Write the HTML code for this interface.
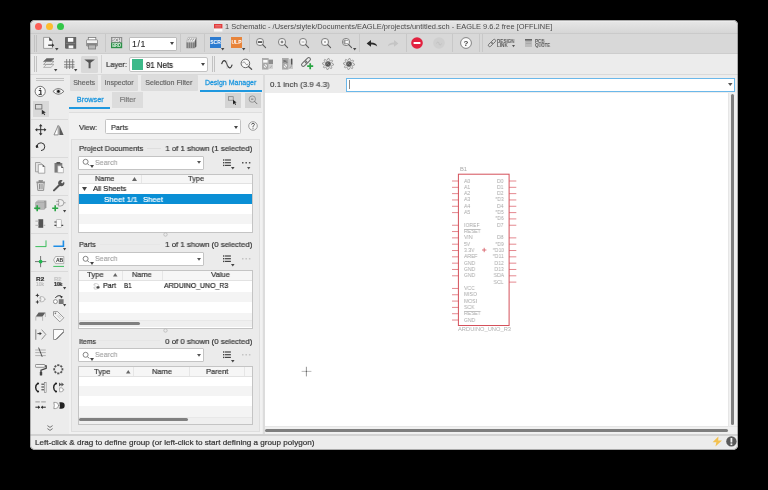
<!DOCTYPE html>
<html><head><meta charset="utf-8">
<style>
*{box-sizing:border-box;margin:0;padding:0}
html,body{width:768px;height:490px;overflow:hidden;background:#000}
body{position:relative;font-family:"Liberation Sans",sans-serif;color:#333}
.a{position:absolute}
#win{position:absolute;left:30px;top:20px;width:708px;height:430px;background:#ececec;border-radius:5px;overflow:hidden}
#pg{position:absolute;left:-30px;top:-20px;width:768px;height:490px}
.t{position:absolute;white-space:nowrap;line-height:1;-webkit-text-stroke:0.2px currentColor;will-change:transform}
svg{overflow:visible;will-change:transform}
</style></head><body>
<div id="win"><div id="pg">
<div class="a" style="left:30px;top:20px;width:708px;height:12.6px;background:linear-gradient(#e8e8e8,#d6d6d6)"></div>
<div class="a" style="left:30px;top:32.6px;width:708px;height:20.4px;background:#d8d8d8;border-top:1px solid #cacaca"></div>
<div class="a" style="left:30px;top:53px;width:708px;height:21px;background:#ececec;border-top:1px solid #cdcdcd"></div>
<div class="a" style="left:30px;top:74px;width:39px;height:360px;background:#ececec;border-right:1px solid #d4d4d4;border-top:1px solid #dadada"></div>
<div class="a" style="left:68px;top:74px;width:195px;height:360px;background:#ececec;border-top:1px solid #dadada"></div>
<div class="a" style="left:263px;top:74px;width:2px;height:360px;background:#dcdcdc"></div>
<div class="a" style="left:265px;top:74px;width:473px;height:19px;background:#ececec;border-top:1px solid #dadada"></div>
<div class="a" style="left:265px;top:93px;width:463px;height:333px;background:#fff"></div>
<div class="a" style="left:728px;top:93px;width:10px;height:333px;background:#f0f0f0;border-left:1px solid #e6e6e6"></div>
<div class="a" style="left:731px;top:94px;width:3px;height:331px;background:#7e7e7e;border-radius:2px"></div>
<div class="a" style="left:265px;top:426px;width:473px;height:8px;background:#f0f0f0;border-top:1px solid #e6e6e6"></div>
<div class="a" style="left:265px;top:429px;width:463px;height:3px;background:#7e7e7e;border-radius:2px"></div>
<div class="a" style="left:30px;top:434px;width:708px;height:16px;background:#ececec;border-top:2px solid #d2d2d2"></div>
<div class="a" style="left:35.1px;top:23.2px;width:7px;height:7px;border-radius:50%;background:#fc5f57"></div>
<div class="a" style="left:46.0px;top:23.2px;width:7px;height:7px;border-radius:50%;background:#fdbc2e"></div>
<div class="a" style="left:57.1px;top:23.2px;width:7px;height:7px;border-radius:50%;background:#33c748"></div>
<div class="a" style="left:70px;top:75px;width:28px;height:15.5px;background:#dcdcdc;border-radius:1px"></div>
<div class="t" style="left:-66.0px;width:300px;text-align:center;top:79.3px;font-size:7.8px;color:#666;"><span style="display:inline-block;transform:scaleX(0.9063);transform-origin:50% 0">Sheets</span></div>
<div class="a" style="left:100.5px;top:75px;width:37.5px;height:15.5px;background:#dcdcdc;border-radius:1px"></div>
<div class="t" style="left:-30.75px;width:300px;text-align:center;top:79.3px;font-size:7.8px;color:#666;"><span style="display:inline-block;transform:scaleX(0.9042);transform-origin:50% 0">Inspector</span></div>
<div class="a" style="left:141px;top:75px;width:56.5px;height:15.5px;background:#dcdcdc;border-radius:1px"></div>
<div class="t" style="left:19.25px;width:300px;text-align:center;top:79.3px;font-size:7.8px;color:#666;"><span style="display:inline-block;transform:scaleX(0.9114);transform-origin:50% 0">Selection Filter</span></div>
<div class="t" style="left:80.75px;width:300px;text-align:center;top:79.3px;font-size:7.8px;color:#1f98df;-webkit-text-stroke:0.3px"><span style="display:inline-block;transform:scaleX(0.8985);transform-origin:50% 0">Design Manager</span></div>
<div class="a" style="left:200px;top:89.5px;width:61.5px;height:2px;background:#1f98df"></div>
<div class="t" style="left:-60.5px;width:300px;text-align:center;top:95.9px;font-size:7.8px;color:#1f98df;-webkit-text-stroke:0.3px"><span style="display:inline-block;transform:scaleX(0.9442);transform-origin:50% 0">Browser</span></div>
<div class="a" style="left:69px;top:106.8px;width:41px;height:2px;background:#1f98df"></div>
<div class="a" style="left:112px;top:92px;width:31px;height:16px;background:#dcdcdc"></div>
<div class="t" style="left:-22.5px;width:300px;text-align:center;top:95.9px;font-size:7.8px;color:#777;"><span style="display:inline-block;transform:scaleX(0.9235);transform-origin:50% 0">Filter</span></div>
<div class="a" style="left:225px;top:92.5px;width:15.5px;height:15.2px;background:#d4d4d4"></div>
<div class="a" style="left:245px;top:92.5px;width:16px;height:15.2px;background:#d4d4d4"></div>
<div class="a" style="left:69px;top:111.5px;width:193px;height:322.5px;background:#f1f1f1;border-top:1px solid #dedede"></div>
<div class="t" style="left:79px;top:123.8px;font-size:8px;color:#333;transform:scaleX(0.9270);transform-origin:0 0;">View:</div>
<div class="a" style="left:105px;top:119.2px;width:135.5px;height:14.4px;background:#fff;border:1px solid #c4c4c4;border-radius:1.5px"></div>
<div class="t" style="left:111px;top:123.8px;font-size:8px;color:#333;transform:scaleX(0.9105);transform-origin:0 0;">Parts</div>
<div class="a" style="left:71px;top:139px;width:188.5px;height:293px;background:#ebebeb;border:1px solid #dedede"></div>
<div class="t" style="left:78.5px;top:144.7px;font-size:8px;color:#333;transform:scaleX(0.9514);transform-origin:0 0;">Project Documents</div>
<div class="t" style="right:515.5px;top:144.7px;font-size:8px;color:#333;transform:scaleX(0.9733);transform-origin:100% 0;">1 of 1 shown (1 selected)</div>
<div class="a" style="left:78.3px;top:155.5px;width:125.5px;height:14px;background:#fff;border:1px solid #c4c4c4;border-radius:1px"></div>
<div class="t" style="left:94.8px;top:158.5px;font-size:8px;color:#9c9c9c;transform:scaleX(0.8877);transform-origin:0 0;-webkit-text-stroke:0.1px">Search</div>
<div class="a" style="left:78.4px;top:173.5px;width:174.5px;height:59px;background:#fff;border:1px solid #c4c4c4"></div>
<div class="a" style="left:79.4px;top:174.5px;width:172.5px;height:9.5px;background:#f6f6f6;border-bottom:1px solid #e2e2e2"></div>
<div class="t" style="left:78.5px;top:241.3px;font-size:8px;color:#333;transform:scaleX(0.8944);transform-origin:0 0;">Parts</div>
<div class="t" style="right:515.5px;top:241.3px;font-size:8px;color:#333;transform:scaleX(0.9756);transform-origin:100% 0;">1 of 1 shown (0 selected)</div>
<div class="a" style="left:78.3px;top:252px;width:125.5px;height:14px;background:#fff;border:1px solid #c4c4c4;border-radius:1px"></div>
<div class="t" style="left:94.8px;top:255px;font-size:8px;color:#9c9c9c;transform:scaleX(0.8877);transform-origin:0 0;-webkit-text-stroke:0.1px">Search</div>
<div class="a" style="left:78.4px;top:270px;width:174.5px;height:58.5px;background:#fff;border:1px solid #c4c4c4"></div>
<div class="a" style="left:79.4px;top:271px;width:172.5px;height:9.5px;background:#f6f6f6;border-bottom:1px solid #e2e2e2"></div>
<div class="t" style="left:78.5px;top:337.5px;font-size:8px;color:#333;transform:scaleX(0.8692);transform-origin:0 0;">Items</div>
<div class="t" style="right:515.5px;top:337.5px;font-size:8px;color:#333;transform:scaleX(0.9756);transform-origin:100% 0;">0 of 0 shown (0 selected)</div>
<div class="a" style="left:78.3px;top:348px;width:125.5px;height:14px;background:#fff;border:1px solid #c4c4c4;border-radius:1px"></div>
<div class="t" style="left:94.8px;top:351px;font-size:8px;color:#9c9c9c;transform:scaleX(0.8877);transform-origin:0 0;-webkit-text-stroke:0.1px">Search</div>
<div class="a" style="left:78.4px;top:366px;width:174.5px;height:58.7px;background:#fff;border:1px solid #c4c4c4"></div>
<div class="a" style="left:79.4px;top:367px;width:172.5px;height:9.5px;background:#f6f6f6;border-bottom:1px solid #e2e2e2"></div>
<div class="a" style="left:79.4px;top:193.9px;width:172.5px;height:10.4px;background:#0a8fd5"></div>
<div class="a" style="left:79.4px;top:213.8px;width:172.5px;height:10.2px;background:#f4f4f4"></div>
<div class="t" style="left:95px;top:174.5px;font-size:8px;color:#333;transform:scaleX(0.9091);transform-origin:0 0;">Name</div>
<div class="t" style="left:188.3px;top:174.5px;font-size:8px;color:#333;transform:scaleX(0.9225);transform-origin:0 0;">Type</div>
<div class="t" style="left:92.6px;top:185px;font-size:8px;color:#222;transform:scaleX(0.9245);transform-origin:0 0;">All Sheets</div>
<div class="t" style="left:103.7px;top:195.5px;font-size:8px;color:#fff;transform:scaleX(0.9810);transform-origin:0 0;">Sheet 1/1</div>
<div class="t" style="left:143.4px;top:195.5px;font-size:8px;color:#fff;transform:scaleX(0.9567);transform-origin:0 0;">Sheet</div>
<div class="a" style="left:79.4px;top:291.6px;width:172.5px;height:10.5px;background:#f4f4f4"></div>
<div class="a" style="left:79.4px;top:313.4px;width:172.5px;height:7px;background:#f4f4f4"></div>
<div class="a" style="left:79.4px;top:320.4px;width:172.5px;height:7px;background:#efefef;border-top:1px solid #e8e8e8"></div>
<div class="t" style="left:87px;top:270.8px;font-size:8px;color:#333;transform:scaleX(0.9571);transform-origin:0 0;">Type</div>
<div class="t" style="left:131.7px;top:270.8px;font-size:8px;color:#333;transform:scaleX(0.9185);transform-origin:0 0;">Name</div>
<div class="t" style="left:211.4px;top:270.8px;font-size:8px;color:#333;transform:scaleX(0.9513);transform-origin:0 0;">Value</div>
<div class="t" style="left:102.7px;top:282px;font-size:8px;color:#222;transform:scaleX(0.8860);transform-origin:0 0;">Part</div>
<div class="t" style="left:124.2px;top:282px;font-size:8px;color:#222;transform:scaleX(0.7971);transform-origin:0 0;">B1</div>
<div class="t" style="left:164.4px;top:282px;font-size:8px;color:#222;transform:scaleX(0.8714);transform-origin:0 0;">ARDUINO_UNO_R3</div>
<div class="a" style="left:79.4px;top:322px;width:60.5px;height:3.2px;background:#808080;border-radius:2px"></div>
<div class="a" style="left:79.4px;top:386.2px;width:172.5px;height:9.8px;background:#f4f4f4"></div>
<div class="a" style="left:79.4px;top:406px;width:172.5px;height:10.5px;background:#f4f4f4"></div>
<div class="a" style="left:79.4px;top:416.5px;width:172.5px;height:7px;background:#efefef;border-top:1px solid #e8e8e8"></div>
<div class="t" style="left:93.6px;top:367.5px;font-size:8px;color:#333;transform:scaleX(0.9456);transform-origin:0 0;">Type</div>
<div class="t" style="left:151.5px;top:367.5px;font-size:8px;color:#333;transform:scaleX(0.9325);transform-origin:0 0;">Name</div>
<div class="t" style="left:205.6px;top:367.5px;font-size:8px;color:#333;transform:scaleX(0.9461);transform-origin:0 0;">Parent</div>
<div class="a" style="left:79.4px;top:418.3px;width:108.5px;height:3.2px;background:#808080;border-radius:2px"></div>
<div class="t" style="left:34.5px;top:438.8px;font-size:8px;color:#333;transform:scaleX(1.0154);transform-origin:0 0;">Left-click &amp; drag to define group (or left-click to start defining a group polygon)</div>
<div class="t" style="left:269.5px;top:81px;font-size:8px;color:#333;transform:scaleX(0.9928);transform-origin:0 0;-webkit-text-stroke:0.1px">0.1 inch (3.9 4.3)</div>
<div class="a" style="left:346px;top:77.5px;width:389px;height:14px;background:#fff;border:1px solid #6bb8ea"></div>
<svg class="a" style="left:234.0px;top:125.5px;" width="4" height="3" viewBox="0 0 4 3"><path d="M0 0H4L2.0 3Z" fill="#444"/></svg>
<svg class="a" style="left:248px;top:121px;" width="10" height="10" viewBox="0 0 10 10"><circle cx="5" cy="5" r="4.3" fill="#f6f6f6" stroke="#888" stroke-width="0.8"/><path d="M3.6 3.6Q3.8 2.3 5 2.3Q6.4 2.3 6.4 3.5Q6.4 4.3 5.4 4.8Q5 5 5 5.9" fill="none" stroke="#555" stroke-width="1"/><rect x="4.5" y="6.7" width="1" height="1" fill="#555"/></svg>
<svg class="a" style="left:81.5px;top:158.1px;" width="9" height="9" viewBox="0 0 9 9"><circle cx="3.6" cy="3.8" r="2.5" fill="none" stroke="#777" stroke-width="0.9"/><path d="M5.4 5.6L7.2 7.4" stroke="#777" stroke-width="1"/></svg>
<svg class="a" style="left:89.6px;top:165.4px;" width="4" height="3" viewBox="0 0 4 3"><path d="M0 0H4L2.0 3Z" fill="#444"/></svg>
<svg class="a" style="left:197.0px;top:161.1px;" width="4" height="2.8" viewBox="0 0 4 2.8"><path d="M0 0H4L2.0 2.8Z" fill="#555"/></svg>
<svg class="a" style="left:223px;top:159.9px;" width="9" height="9" viewBox="0 0 9 9"><rect x="0" y="-0.70" width="1.3" height="1.4" fill="#444"/><rect x="1.9" y="-0.60" width="6" height="1.2" fill="#444"/><rect x="0" y="2.00" width="1.3" height="1.4" fill="#444"/><rect x="1.9" y="2.10" width="6" height="1.2" fill="#444"/><rect x="0" y="4.70" width="1.3" height="1.4" fill="#444"/><rect x="1.9" y="4.80" width="6" height="1.2" fill="#444"/></svg>
<svg class="a" style="left:230.79999999999998px;top:167.1px;" width="3.6" height="2.6" viewBox="0 0 3.6 2.6"><path d="M0 0H3.6L1.8 2.6Z" fill="#444"/></svg>
<svg class="a" style="left:241.8px;top:161.8px;" width="10" height="2" viewBox="0 0 10 2"><rect x="0.00" y="0" width="1.5" height="1.5" fill="#555"/><rect x="3.45" y="0" width="1.5" height="1.5" fill="#555"/><rect x="6.90" y="0" width="1.5" height="1.5" fill="#555"/></svg>
<svg class="a" style="left:247.10000000000002px;top:167.3px;" width="3.4" height="2.4" viewBox="0 0 3.4 2.4"><path d="M0 0H3.4L1.7 2.4Z" fill="#555"/></svg>
<svg class="a" style="left:81.5px;top:254.6px;" width="9" height="9" viewBox="0 0 9 9"><circle cx="3.6" cy="3.8" r="2.5" fill="none" stroke="#777" stroke-width="0.9"/><path d="M5.4 5.6L7.2 7.4" stroke="#777" stroke-width="1"/></svg>
<svg class="a" style="left:89.6px;top:261.9px;" width="4" height="3" viewBox="0 0 4 3"><path d="M0 0H4L2.0 3Z" fill="#444"/></svg>
<svg class="a" style="left:197.0px;top:257.6px;" width="4" height="2.8" viewBox="0 0 4 2.8"><path d="M0 0H4L2.0 2.8Z" fill="#555"/></svg>
<svg class="a" style="left:223px;top:256.4px;" width="9" height="9" viewBox="0 0 9 9"><rect x="0" y="-0.70" width="1.3" height="1.4" fill="#444"/><rect x="1.9" y="-0.60" width="6" height="1.2" fill="#444"/><rect x="0" y="2.00" width="1.3" height="1.4" fill="#444"/><rect x="1.9" y="2.10" width="6" height="1.2" fill="#444"/><rect x="0" y="4.70" width="1.3" height="1.4" fill="#444"/><rect x="1.9" y="4.80" width="6" height="1.2" fill="#444"/></svg>
<svg class="a" style="left:230.79999999999998px;top:263.59999999999997px;" width="3.6" height="2.6" viewBox="0 0 3.6 2.6"><path d="M0 0H3.6L1.8 2.6Z" fill="#444"/></svg>
<svg class="a" style="left:241.8px;top:258.3px;" width="10" height="2" viewBox="0 0 10 2"><rect x="0.00" y="0" width="1.5" height="1.5" fill="#c4c4c4"/><rect x="3.45" y="0" width="1.5" height="1.5" fill="#c4c4c4"/><rect x="6.90" y="0" width="1.5" height="1.5" fill="#c4c4c4"/></svg>
<svg class="a" style="left:81.5px;top:350.6px;" width="9" height="9" viewBox="0 0 9 9"><circle cx="3.6" cy="3.8" r="2.5" fill="none" stroke="#777" stroke-width="0.9"/><path d="M5.4 5.6L7.2 7.4" stroke="#777" stroke-width="1"/></svg>
<svg class="a" style="left:89.6px;top:357.9px;" width="4" height="3" viewBox="0 0 4 3"><path d="M0 0H4L2.0 3Z" fill="#444"/></svg>
<svg class="a" style="left:197.0px;top:353.6px;" width="4" height="2.8" viewBox="0 0 4 2.8"><path d="M0 0H4L2.0 2.8Z" fill="#555"/></svg>
<svg class="a" style="left:223px;top:352.4px;" width="9" height="9" viewBox="0 0 9 9"><rect x="0" y="-0.70" width="1.3" height="1.4" fill="#444"/><rect x="1.9" y="-0.60" width="6" height="1.2" fill="#444"/><rect x="0" y="2.00" width="1.3" height="1.4" fill="#444"/><rect x="1.9" y="2.10" width="6" height="1.2" fill="#444"/><rect x="0" y="4.70" width="1.3" height="1.4" fill="#444"/><rect x="1.9" y="4.80" width="6" height="1.2" fill="#444"/></svg>
<svg class="a" style="left:230.79999999999998px;top:359.59999999999997px;" width="3.6" height="2.6" viewBox="0 0 3.6 2.6"><path d="M0 0H3.6L1.8 2.6Z" fill="#444"/></svg>
<svg class="a" style="left:241.8px;top:354.3px;" width="10" height="2" viewBox="0 0 10 2"><rect x="0.00" y="0" width="1.5" height="1.5" fill="#c4c4c4"/><rect x="3.45" y="0" width="1.5" height="1.5" fill="#c4c4c4"/><rect x="6.90" y="0" width="1.5" height="1.5" fill="#c4c4c4"/></svg>
<div class="a" style="left:147px;top:147.5px;width:14px;height:1px;background:#dedede"></div>
<div class="a" style="left:100px;top:243.5px;width:60px;height:1px;background:#e6e6e6"></div>
<div class="a" style="left:98px;top:339.5px;width:62px;height:1px;background:#e6e6e6"></div>
<svg class="a" style="left:162.5px;top:232px;" width="5" height="5" viewBox="0 0 5 5"><circle cx="2.5" cy="2.5" r="1.7" fill="none" stroke="#b8b8b8" stroke-width="0.8"/></svg>
<svg class="a" style="left:162.5px;top:328.4px;" width="5" height="5" viewBox="0 0 5 5"><circle cx="2.5" cy="2.5" r="1.7" fill="none" stroke="#b8b8b8" stroke-width="0.8"/></svg>
<svg class="a" style="left:132.0px;top:177.0px;" width="5" height="4" viewBox="0 0 5 4"><path d="M0 4H5L2.5 0Z" fill="#666"/></svg>
<div class="a" style="left:140.6px;top:174.5px;width:1px;height:8.5px;background:#e6e6e6"></div>
<svg class="a" style="left:82.3px;top:186.8px;" width="5" height="4" viewBox="0 0 5 4"><path d="M0 0H5L2.5 4Z" fill="#444"/></svg>
<svg class="a" style="left:112.95px;top:273.4px;" width="4.5" height="3.6" viewBox="0 0 4.5 3.6"><path d="M0 3.6H4.5L2.25 0Z" fill="#666"/></svg>
<div class="a" style="left:121.6px;top:271px;width:1px;height:9px;background:#e6e6e6"></div>
<div class="a" style="left:161.9px;top:271px;width:1px;height:9px;background:#e6e6e6"></div>
<svg class="a" style="left:92.5px;top:282.5px;" width="8" height="7" viewBox="0 0 8 7"><path d="M1.6 0.5H3A2.8 2.8 0 0 1 3 6.2H1.6Q2.6 3.3 1.6 0.5Z" fill="none" stroke="#c4c4c4" stroke-width="0.7"/><path d="M0.2 1.8H1.8M0.2 4.8H1.8" stroke="#c4c4c4" stroke-width="0.7"/><rect x="3.4" y="3.3" width="3.2" height="2.3" rx="1" fill="#444"/></svg>
<svg class="a" style="left:126.15px;top:369.7px;" width="4.5" height="3.6" viewBox="0 0 4.5 3.6"><path d="M0 3.6H4.5L2.25 0Z" fill="#666"/></svg>
<div class="a" style="left:133.4px;top:367px;width:1px;height:9px;background:#e6e6e6"></div>
<div class="a" style="left:189px;top:367px;width:1px;height:9px;background:#e6e6e6"></div>
<div class="a" style="left:244.3px;top:367px;width:1px;height:9px;background:#e6e6e6"></div>
<svg class="a" style="left:727.55px;top:83.0px;" width="4.5" height="3" viewBox="0 0 4.5 3"><path d="M0 0H4.5L2.25 3Z" fill="#555"/></svg>
<div class="a" style="left:349px;top:80px;width:0.8px;height:9px;background:#888"></div>
<div class="a" style="left:34px;top:35px;width:0.8px;height:17px;background:#c2c2c2"></div>
<div class="a" style="left:35.8px;top:35px;width:0.8px;height:17px;background:#c2c2c2"></div>
<div class="a" style="left:34px;top:56px;width:0.8px;height:16px;background:#c2c2c2"></div>
<div class="a" style="left:35.8px;top:56px;width:0.8px;height:16px;background:#c2c2c2"></div>
<svg class="a" style="left:43px;top:37px;" width="14" height="14" viewBox="0 0 14 14"><path d="M0.6 0.4H6.4L9.4 3.6V11.4H0.6Z" fill="#f6f6f6" stroke="#8a8a8a" stroke-width="0.8"/><path d="M6.2 0.2L9.6 3.8H6.2Z" fill="#444"/><path d="M5.2 8.2H10.2" stroke="#3a3a3a" stroke-width="1.3"/><path d="M9 6.2L11.3 8.2L9 10.2Z" fill="#3a3a3a"/></svg>
<svg class="a" style="left:54.6px;top:47.800000000000004px;" width="3.6" height="2.6" viewBox="0 0 3.6 2.6"><path d="M0 0H3.6L1.8 2.6Z" fill="#444"/></svg>
<svg class="a" style="left:65px;top:37px;" width="12" height="12" viewBox="0 0 12 12"><path d="M0 0.8Q0 0 0.8 0H11.2V11.8H0.8L0 11Z" fill="#646464"/><rect x="2.9" y="0.9" width="5.4" height="3.9" fill="#fff"/><rect x="3.6" y="8.5" width="4.7" height="2.8" fill="#fafafa"/><rect x="1" y="6.4" width="9.2" height="0.6" fill="#8a8a8a"/></svg>
<svg class="a" style="left:86px;top:36.5px;" width="12" height="13" viewBox="0 0 12 13"><rect x="2.3" y="0.5" width="7.5" height="3.5" fill="#fff" stroke="#7a7a7a" stroke-width="0.8"/><rect x="0.4" y="2.8" width="11.2" height="6.2" rx="0.8" fill="#f2f2f2" stroke="#7a7a7a" stroke-width="0.8"/><rect x="0.6" y="6" width="10.8" height="2.8" fill="#8c8c8c"/><rect x="2.6" y="8" width="7" height="4" fill="#b8b8b8" stroke="#7a7a7a" stroke-width="0.8"/></svg>
<div class="a" style="left:104.5px;top:34px;width:1px;height:18px;background:#c8c8c8"></div>
<svg class="a" style="left:110.8px;top:37.2px;" width="11.2" height="11.2" viewBox="0 0 11.2 11.2"><rect x="0.3" y="0.3" width="10.6" height="5.4" fill="#9a9a9a" stroke="#7e7e7e" stroke-width="0.6"/><rect x="0" y="5.6" width="11.2" height="5.6" fill="#2c9048"/><text x="5.6" y="4.9" font-size="4.8" text-anchor="middle" fill="#fff" font-family="Liberation Sans" font-weight="bold" transform="translate(5.6 0) scale(0.85 1) translate(-5.6 0)">SCH</text><text x="5.6" y="10.4" font-size="4.8" text-anchor="middle" fill="#e6f6ea" font-family="Liberation Sans" font-weight="bold" transform="translate(5.6 0) scale(0.85 1) translate(-5.6 0)">BRD</text></svg>
<div class="a" style="left:128.6px;top:36.6px;width:48px;height:14.4px;background:#fff;border:1px solid #bdbdbd;border-radius:1px"></div>
<div class="t" style="left:131.8px;top:39.6px;font-size:8.6px;color:#2a2a2a;transform:scaleX(1.0212);transform-origin:0 0;letter-spacing:0.6px;-webkit-text-stroke:0.1px">1/1</div>
<svg class="a" style="left:169.5px;top:42.0px;" width="4" height="3" viewBox="0 0 4 3"><path d="M0 0H4L2.0 3Z" fill="#444"/></svg>
<div class="a" style="left:180px;top:34px;width:1px;height:18px;background:#c8c8c8"></div>
<svg class="a" style="left:185.5px;top:37px;" width="11" height="12" viewBox="0 0 11 12"><path d="M0.4 4.8L2.2 0.4H10.4L8.6 4.8Z" fill="#ededed" stroke="#999" stroke-width="0.5"/><path d="M8.6 4.8L10.4 0.4V9.4L8.6 11.2Z" fill="#5e5e5e"/><rect x="0.4" y="4.8" width="8.2" height="6.4" fill="#7c7c7c"/><path d="M2.4 5V11.2M4.6 5V11.2M6.6 5V11.2" stroke="#b4b4b4" stroke-width="0.7"/><path d="M0.4 4.9H8.6" stroke="#f0f0f0" stroke-width="0.7"/><path d="M2 3.6L3.6 1.4M4.2 3.6L5.8 1.4M6.4 3.6L8 1.4" stroke="#7a7a7a" stroke-width="0.8"/></svg>
<div class="a" style="left:203.5px;top:34px;width:1px;height:18px;background:#c8c8c8"></div>
<svg class="a" style="left:209.7px;top:37.3px;" width="11" height="11" viewBox="0 0 11 11"><rect width="11" height="11" fill="#2c7bd0"/><text x="5.5" y="7.3" font-size="5" text-anchor="middle" fill="#fff" font-family="Liberation Sans" font-weight="bold">SCR</text></svg>
<svg class="a" style="left:220.8px;top:48.0px;" width="3.4" height="2.4" viewBox="0 0 3.4 2.4"><path d="M0 0H3.4L1.7 2.4Z" fill="#444"/></svg>
<svg class="a" style="left:231px;top:37.3px;" width="11" height="11" viewBox="0 0 11 11"><rect width="11" height="11" fill="#e8843a"/><text x="5.5" y="7.3" font-size="5" text-anchor="middle" fill="#fff" font-family="Liberation Sans" font-weight="bold">ULP</text></svg>
<svg class="a" style="left:242.10000000000002px;top:48.0px;" width="3.4" height="2.4" viewBox="0 0 3.4 2.4"><path d="M0 0H3.4L1.7 2.4Z" fill="#444"/></svg>
<div class="a" style="left:248.8px;top:34px;width:1px;height:18px;background:#c8c8c8"></div>
<svg class="a" style="left:253.8px;top:35.8px;" width="14" height="14" viewBox="0 0 14 14"><circle cx="6" cy="6" r="3.6" fill="#fbfbfb" stroke="#6e6e6e" stroke-width="0.9"/><circle cx="6" cy="6" r="2.9" fill="none" stroke="#c8c8c8" stroke-width="0.5"/><path d="M8.7 8.7L11.6 11.6" stroke="#5a5a5a" stroke-width="1.1" stroke-linecap="round"/><rect x="3.9" y="5.2" width="4.3" height="1.7" fill="#4a4a4a"/></svg>
<svg class="a" style="left:275.5px;top:35.8px;" width="14" height="14" viewBox="0 0 14 14"><circle cx="6" cy="6" r="3.6" fill="#fbfbfb" stroke="#6e6e6e" stroke-width="0.9"/><circle cx="6" cy="6" r="2.9" fill="none" stroke="#c8c8c8" stroke-width="0.5"/><path d="M8.7 8.7L11.6 11.6" stroke="#5a5a5a" stroke-width="1.1" stroke-linecap="round"/><path d="M6 4.6V7.4M4.6 6H7.4" stroke="#555" stroke-width="0.9"/></svg>
<svg class="a" style="left:297.2px;top:35.8px;" width="14" height="14" viewBox="0 0 14 14"><circle cx="6" cy="6" r="3.6" fill="#fbfbfb" stroke="#6e6e6e" stroke-width="0.9"/><circle cx="6" cy="6" r="2.9" fill="none" stroke="#c8c8c8" stroke-width="0.5"/><path d="M8.7 8.7L11.6 11.6" stroke="#5a5a5a" stroke-width="1.1" stroke-linecap="round"/><path d="M4.6 6H7.4" stroke="#aaa" stroke-width="1"/></svg>
<svg class="a" style="left:318.6px;top:35.8px;" width="14" height="14" viewBox="0 0 14 14"><circle cx="6" cy="6" r="3.6" fill="#fbfbfb" stroke="#6e6e6e" stroke-width="0.9"/><circle cx="6" cy="6" r="2.9" fill="none" stroke="#c8c8c8" stroke-width="0.5"/><path d="M8.7 8.7L11.6 11.6" stroke="#5a5a5a" stroke-width="1.1" stroke-linecap="round"/><rect x="5.1" y="5.1" width="1.8" height="1.8" fill="#aaa"/></svg>
<svg class="a" style="left:340px;top:35.8px;" width="14" height="14" viewBox="0 0 14 14"><circle cx="6" cy="6" r="3.6" fill="#fbfbfb" stroke="#6e6e6e" stroke-width="0.9"/><circle cx="6" cy="6" r="2.9" fill="none" stroke="#c8c8c8" stroke-width="0.5"/><path d="M8.7 8.7L11.6 11.6" stroke="#5a5a5a" stroke-width="1.1" stroke-linecap="round"/><path d="M3.2 6A2.8 2.8 0 0 1 5.4 3.2V8.8A2.8 2.8 0 0 1 3.2 6Z" fill="#999"/><rect x="4" y="4.2" width="4" height="0.8" fill="#999"/><rect x="4" y="7" width="4" height="0.8" fill="#999"/></svg>
<svg class="a" style="left:352.7px;top:48.0px;" width="3.4" height="2.4" viewBox="0 0 3.4 2.4"><path d="M0 0H3.4L1.7 2.4Z" fill="#444"/></svg>
<div class="a" style="left:359.4px;top:34px;width:1px;height:18px;background:#c8c8c8"></div>
<svg class="a" style="left:366px;top:38.5px;" width="12" height="9" viewBox="0 0 12 9"><path d="M11.2 7.6C10.6 4.6 8.6 3.6 5 3.6V1L0.6 4.4L5 7.8V5.4C7.6 5.4 9.6 5.8 11.2 7.6Z" fill="#2a2a2a"/></svg>
<svg class="a" style="left:386.8px;top:38.5px;" width="12" height="9" viewBox="0 0 12 9"><path d="M0.8 7.6C1.4 4.6 3.4 3.6 7 3.6V1L11.4 4.4L7 7.8V5.4C4.4 5.4 2.4 5.8 0.8 7.6Z" fill="#c4c4c4"/></svg>
<div class="a" style="left:405.6px;top:34px;width:1px;height:18px;background:#c8c8c8"></div>
<svg class="a" style="left:411px;top:37px;" width="12" height="12" viewBox="0 0 12 12"><circle cx="6" cy="6" r="5.8" fill="#e2213f"/><rect x="2.6" y="5" width="6.8" height="2" fill="#fff"/></svg>
<svg class="a" style="left:432.5px;top:37px;" width="12" height="12" viewBox="0 0 12 12"><circle cx="6" cy="6" r="5.8" fill="#cfcfcf"/><path d="M3.5 6.5c1-2 2-2 2.5 0s1.5 2 2.5 0" stroke="#bdbdbd" stroke-width="0.8" fill="none"/></svg>
<div class="a" style="left:451.9px;top:34px;width:1px;height:18px;background:#c8c8c8"></div>
<svg class="a" style="left:459.6px;top:37px;" width="12" height="12" viewBox="0 0 12 12"><circle cx="6" cy="6" r="5.4" fill="#fbfbfb" stroke="#777" stroke-width="0.9"/><text x="6" y="8.7" font-size="8" text-anchor="middle" fill="#444" font-family="Liberation Sans" font-weight="bold">?</text></svg>
<div class="a" style="left:478.8px;top:34px;width:1px;height:18px;background:#c8c8c8"></div>
<div class="a" style="left:481.5px;top:34px;width:1px;height:18px;background:#c8c8c8"></div>
<svg class="a" style="left:488.4px;top:38.8px;" width="8" height="8" viewBox="0 0 8 8"><g transform="translate(4 4) rotate(-45)"><rect x="-4.6" y="-1.4" width="5.2" height="2.8" rx="1.4" fill="none" stroke="#666" stroke-width="0.85"/><rect x="-0.6" y="-1.4" width="5.2" height="2.8" rx="1.4" fill="none" stroke="#666" stroke-width="0.85"/></g></svg>
<div class="t" style="left:497.2px;top:39.5px;font-size:4.6px;color:#555;transform:scaleX(0.9766);transform-origin:0 0;font-weight:bold;-webkit-text-stroke:0">DESIGN</div>
<div class="t" style="left:497.2px;top:43.9px;font-size:4.6px;color:#555;transform:scaleX(0.9792);transform-origin:0 0;font-weight:bold;-webkit-text-stroke:0">LINK</div>
<svg class="a" style="left:511.5px;top:44.5px;" width="3" height="2.2" viewBox="0 0 3 2.2"><path d="M0 0H3L1.5 2.2Z" fill="#555"/></svg>
<svg class="a" style="left:525px;top:38.6px;" width="7" height="8" viewBox="0 0 7 8"><rect x="0" y="0" width="7" height="8" fill="#bcbcbc"/><rect x="0" y="0" width="7" height="1.6" fill="#666"/><rect x="0.8" y="2.6" width="5.4" height="0.5" fill="#999"/><rect x="0.8" y="4.2" width="5.4" height="0.5" fill="#999"/></svg>
<div class="t" style="left:535px;top:39.5px;font-size:4.6px;color:#555;transform:scaleX(0.9528);transform-origin:0 0;font-weight:bold;-webkit-text-stroke:0">PCB</div>
<div class="t" style="left:535px;top:43.9px;font-size:4.6px;color:#555;transform:scaleX(0.9183);transform-origin:0 0;font-weight:bold;-webkit-text-stroke:0">QUOTE</div>
<svg class="a" style="left:43px;top:58px;" width="12" height="11" viewBox="0 0 12 11"><path d="M0.5 3.6L3.6 0.6H11L7.9 3.6Z" fill="#666" stroke="#666" stroke-width="0.6"/><path d="M0.5 6.4L3.6 3.4H11L7.9 6.4Z" fill="none" stroke="#8a8a8a" stroke-width="0.7"/><path d="M0.5 9.4L3.6 6.4H11L7.9 9.4Z" fill="none" stroke="#9a9a9a" stroke-width="0.7"/></svg>
<svg class="a" style="left:53.9px;top:68.8px;" width="3.4" height="2.4" viewBox="0 0 3.4 2.4"><path d="M0 0H3.4L1.7 2.4Z" fill="#444"/></svg>
<svg class="a" style="left:63.5px;top:58.5px;" width="11" height="10.5" viewBox="0 0 11 10.5"><path d="M2.7 0V10M5.6 0V10M8.7 0V10M0 2.9H10.5M0 5.7H10.5M0 8H10.5" stroke="#6c6c6c" stroke-width="0.8"/></svg>
<svg class="a" style="left:74.2px;top:68.8px;" width="3.4" height="2.4" viewBox="0 0 3.4 2.4"><path d="M0 0H3.4L1.7 2.4Z" fill="#444"/></svg>
<div class="a" style="left:81.3px;top:56px;width:17px;height:16.7px;background:#d9d9d9;border-radius:1.5px"></div>
<svg class="a" style="left:83.5px;top:59px;" width="12" height="10" viewBox="0 0 12 10"><path d="M0.3 0.5H11L6.6 3.8V9.3H4.6V3.8Z" fill="#555"/></svg>
<div class="a" style="left:101.3px;top:55px;width:1px;height:18px;background:#d4d4d4"></div>
<div class="t" style="left:105.6px;top:60.5px;font-size:8px;color:#333;transform:scaleX(0.9445);transform-origin:0 0;">Layer:</div>
<div class="a" style="left:129px;top:57.3px;width:78.5px;height:14.5px;background:#fff;border:1px solid #c2c2c2;border-radius:2px"></div>
<div class="a" style="left:131.5px;top:58.9px;width:11.6px;height:11.2px;background:#3dba8a"></div>
<div class="t" style="left:146.3px;top:60.6px;font-size:8.3px;color:#222;transform:scaleX(0.9408);transform-origin:0 0;">91 Nets</div>
<svg class="a" style="left:200.5px;top:62.8px;" width="4" height="3" viewBox="0 0 4 3"><path d="M0 0H4L2.0 3Z" fill="#444"/></svg>
<div class="a" style="left:211.8px;top:56px;width:0.8px;height:16px;background:#c2c2c2"></div>
<div class="a" style="left:213.60000000000002px;top:56px;width:0.8px;height:16px;background:#c2c2c2"></div>
<svg class="a" style="left:220.5px;top:59.5px;" width="12" height="9" viewBox="0 0 12 9"><path d="M0.6 4.2C2 -0.6 4.4 -0.6 5.9 4.2S9.8 9 11.2 4.6" fill="none" stroke="#3a3a3a" stroke-width="1.1"/><path d="M6 0V9" stroke="#bbb" stroke-width="0.5"/></svg>
<svg class="a" style="left:240px;top:57.5px;" width="13" height="13" viewBox="0 0 13 13"><circle cx="5.4" cy="5.4" r="4.3" fill="#f8f8f8" stroke="#666" stroke-width="1"/><path d="M8.5 8.5L11.6 11.3" stroke="#555" stroke-width="1.3" stroke-linecap="round"/><path d="M2.6 5.2C3.6 3.2 4.4 3.6 5.4 5.4S7.4 7.4 8.2 5.6" fill="none" stroke="#666" stroke-width="0.7"/></svg>
<svg class="a" style="left:261.8px;top:58px;" width="11.4" height="11.4" viewBox="0 0 11.4 11.4"><rect x="0.2" y="0.2" width="6.2" height="11" fill="#adadad" stroke="#9a9a9a" stroke-width="0.4"/><rect x="1.2" y="2" width="4.4" height="2.6" fill="#fafafa"/><rect x="6.6" y="1.6" width="4.4" height="4.6" fill="#8e8e8e"/><rect x="6.6" y="6.2" width="4.4" height="4.6" fill="#d0d0d0"/><path d="M7.6 10Q9.6 9.4 9.6 7.6" stroke="#999" stroke-width="0.6" fill="none"/><circle cx="3.4" cy="8" r="2.2" fill="#f2f2f2" stroke="#888" stroke-width="0.6"/><path d="M2 6.8L4.8 9.3" stroke="#777" stroke-width="0.7"/></svg>
<svg class="a" style="left:282.1px;top:58px;" width="11.4" height="11.4" viewBox="0 0 11.4 11.4"><rect x="0.2" y="0.2" width="6.2" height="11" fill="#adadad" stroke="#9a9a9a" stroke-width="0.4"/><rect x="1.2" y="1.8" width="4.4" height="3" fill="#9a9a9a"/><path d="M1.4 2.4L5.4 4.6M1.4 4.4L3.4 2" stroke="#555" stroke-width="0.6"/><rect x="6.6" y="1.2" width="4.4" height="9.8" fill="#c8c8c8"/><rect x="9" y="0.6" width="1.3" height="6" fill="#555"/><path d="M7.4 10Q9.6 9.4 9.6 7.2" stroke="#888" stroke-width="0.6" fill="none"/><circle cx="3.4" cy="8" r="2.2" fill="#f2f2f2" stroke="#888" stroke-width="0.6"/><path d="M2 6.8L4.8 9.3" stroke="#777" stroke-width="0.7"/></svg>
<svg class="a" style="left:301px;top:57.2px;" width="10" height="10" viewBox="0 0 10 10"><g transform="translate(5 5) rotate(-45)"><rect x="-5.6" y="-1.7" width="6.4" height="3.4" rx="1.7" fill="none" stroke="#6a6a6a" stroke-width="1"/><rect x="-0.8" y="-1.7" width="6.4" height="3.4" rx="1.7" fill="none" stroke="#6a6a6a" stroke-width="1"/></g></svg>
<svg class="a" style="left:307.3px;top:63.4px;" width="7" height="7" viewBox="0 0 7 7"><path d="M3.2 0.2V6.2M0.2 3.2H6.2" stroke="#2aa544" stroke-width="1.7"/></svg>
<svg class="a" style="left:322.2px;top:57.6px;" width="12" height="12" viewBox="0 0 12 12"><polygon points="6.00,0.40 7.09,0.51 7.53,2.30 8.22,2.67 9.96,2.04 10.66,2.89 9.70,4.47 9.92,5.22 11.60,6.00 11.49,7.09 9.70,7.53 9.33,8.22 9.96,9.96 9.11,10.66 7.53,9.70 6.78,9.92 6.00,11.60 4.91,11.49 4.47,9.70 3.78,9.33 2.04,9.96 1.34,9.11 2.30,7.53 2.08,6.78 0.40,6.00 0.51,4.91 2.30,4.47 2.67,3.78 2.04,2.04 2.89,1.34 4.47,2.30 5.22,2.08" fill="#e4e4e4" stroke="#8a8a8a" stroke-width="0.7" stroke-linejoin="round"/><circle cx="6" cy="6" r="2.8" fill="#555"/><path d="M4.4 4.6L7.6 7.6M4.2 6.8L6.2 4.2" stroke="#999" stroke-width="0.6"/></svg>
<svg class="a" style="left:342.5px;top:57.6px;" width="12" height="12" viewBox="0 0 12 12"><polygon points="6.00,0.40 7.09,0.51 7.53,2.30 8.22,2.67 9.96,2.04 10.66,2.89 9.70,4.47 9.92,5.22 11.60,6.00 11.49,7.09 9.70,7.53 9.33,8.22 9.96,9.96 9.11,10.66 7.53,9.70 6.78,9.92 6.00,11.60 4.91,11.49 4.47,9.70 3.78,9.33 2.04,9.96 1.34,9.11 2.30,7.53 2.08,6.78 0.40,6.00 0.51,4.91 2.30,4.47 2.67,3.78 2.04,2.04 2.89,1.34 4.47,2.30 5.22,2.08" fill="#e4e4e4" stroke="#8a8a8a" stroke-width="0.7" stroke-linejoin="round"/><circle cx="6" cy="6" r="2.8" fill="#555"/><path d="M4.4 4.6L7.6 7.6M4.2 6.8L6.2 4.2" stroke="#999" stroke-width="0.6"/></svg>
<svg class="a" style="left:214.4px;top:23.6px;" width="8.4" height="7.6" viewBox="0 0 8.4 7.6"><rect x="0" y="0" width="8.4" height="4.6" fill="#e03a3a"/><rect x="0" y="4.6" width="8.4" height="3" fill="#f8f8f8"/><path d="M1.2 1.6h6M1.2 3h6" stroke="#f6b0b0" stroke-width="0.5"/></svg>
<div class="t" style="left:225.2px;top:23.4px;font-size:7.3px;color:#4a4a4a;transform:scaleX(1.0200);transform-origin:0 0;-webkit-text-stroke:0">1 Schematic - /Users/siytek/Documents/EAGLE/projects/untitled.sch - EAGLE 9.6.2 free [OFFLINE]</div>
<div class="a" style="left:35.5px;top:78px;width:28px;height:0.8px;background:#c4c4c4"></div>
<div class="a" style="left:35.5px;top:80px;width:28px;height:0.8px;background:#c4c4c4"></div>
<div class="a" style="left:31px;top:119px;width:37px;height:1px;background:#dadada"></div>
<div class="a" style="left:31px;top:157px;width:37px;height:1px;background:#dadada"></div>
<div class="a" style="left:31px;top:195px;width:37px;height:1px;background:#dadada"></div>
<div class="a" style="left:31px;top:233.3px;width:37px;height:1px;background:#dadada"></div>
<div class="a" style="left:31px;top:270.8px;width:37px;height:1px;background:#dadada"></div>
<svg class="a" style="left:34px;top:86px;" width="12" height="12" viewBox="0 0 12 12"><circle cx="6.2" cy="5.4" r="5.1" fill="#fafafa" stroke="#555" stroke-width="0.8"/><rect x="5.6" y="2" width="1.3" height="1.3" fill="#333"/><path d="M4.8 4.5H6.8V8.2" stroke="#333" stroke-width="1.2" fill="none"/><path d="M4.6 8.4H7.8" stroke="#333" stroke-width="1"/></svg>
<svg class="a" style="left:52px;top:87px;" width="13" height="9" viewBox="0 0 13 9"><path d="M0.9 4.4Q6.4 -1.4 11.9 4.4Q6.4 10.2 0.9 4.4Z" fill="#f6f6f6" stroke="#444" stroke-width="0.7"/><circle cx="6.4" cy="4.4" r="2.3" fill="#bbb"/><circle cx="6.4" cy="4.4" r="1.3" fill="#111"/></svg>
<div class="a" style="left:33px;top:101.3px;width:15.6px;height:15.3px;background:#d9d9d9"></div>
<svg class="a" style="left:35px;top:103.5px;" width="12" height="12" viewBox="0 0 12 12"><rect x="0.4" y="0.6" width="6.5" height="4.4" fill="none" stroke="#666" stroke-width="0.8"/><path d="M6.8 5.8L10.8 8.6L9 9L10.2 10.8L9.4 11.2L8.2 9.4L6.8 10.6Z" fill="#333"/></svg>
<svg class="a" style="left:34.5px;top:123.8px;" width="12" height="12" viewBox="0 0 12 12"><path d="M5.7 1V10.6M1 5.7H10.6" stroke="#333" stroke-width="1"/><path d="M5.7 0L7.5 2.2H3.9ZM5.7 11.4L7.5 9.2H3.9ZM0 5.7L2.2 3.9V7.5ZM11.4 5.7L9.2 3.9V7.5Z" fill="#333"/></svg>
<svg class="a" style="left:52.8px;top:124.6px;" width="12" height="11" viewBox="0 0 12 11"><path d="M5.2 0.4V9.9H1Z" fill="#fff" stroke="#666" stroke-width="0.7"/><path d="M6.4 0.4V9.9H10.6Z" fill="#5a5a5a"/></svg>
<svg class="a" style="left:35px;top:141px;" width="11" height="11" viewBox="0 0 11 11"><path d="M2 5.2A3.9 3.9 0 1 1 6 9.6" fill="none" stroke="#333" stroke-width="1"/><path d="M0.4 5.2L2.2 3.6L3.6 6.8Z" fill="#222"/><circle cx="1.9" cy="6" r="1" fill="#222"/></svg>
<svg class="a" style="left:34.7px;top:161.8px;" width="11" height="12" viewBox="0 0 11 12"><path d="M0.5 0.5H5.2L7 2.4V9.8H0.5Z" fill="#e4e4e4" stroke="#888" stroke-width="0.7"/><path d="M3.3 2.6H7.8L9.8 4.6V11.2H3.3Z" fill="#fafafa" stroke="#888" stroke-width="0.7"/><path d="M7.6 2.5L9.9 4.8H7.6Z" fill="#444"/></svg>
<svg class="a" style="left:53.5px;top:162px;" width="11" height="12" viewBox="0 0 11 12"><rect x="0.5" y="1" width="7.8" height="9.6" fill="#7a7a7a"/><rect x="2.5" y="0" width="3.8" height="1.8" fill="#555"/><path d="M3.7 3.8H7.4L9.4 5.8V10.8H3.7Z" fill="#fafafa" stroke="#999" stroke-width="0.6"/><path d="M7.3 3.7L9.5 5.9H7.3Z" fill="#444"/></svg>
<svg class="a" style="left:35.5px;top:179.8px;" width="10" height="11" viewBox="0 0 10 11"><rect x="0.4" y="1.6" width="8.6" height="1.1" fill="#777"/><rect x="3" y="0.4" width="3.4" height="1.2" fill="none" stroke="#777" stroke-width="0.7"/><path d="M1.2 2.8H8.2L7.6 10.4H1.8Z" fill="#ececec" stroke="#777" stroke-width="0.8"/><path d="M3.4 4V9.2M6 4V9.2" stroke="#777" stroke-width="0.9"/><path d="M4.7 4V9.2" stroke="#aaa" stroke-width="0.9"/></svg>
<svg class="a" style="left:53px;top:179.6px;" width="11.5" height="11.5" viewBox="0 0 11.5 11.5"><path d="M1 10.4L6.2 5.2" stroke="#555" stroke-width="2" stroke-linecap="round"/><path d="M5.4 4.2A3 3 0 0 1 9.6 0.4L8 2.2L9.2 3.4L11 1.8A3 3 0 0 1 7.2 6Z" fill="#555"/></svg>
<svg class="a" style="left:34.5px;top:200px;" width="12" height="10" viewBox="0 0 12 10"><path d="M0.4 2.4L2.6 0.4H11.4V7.4L9.4 9.4H0.4Z" fill="#9a9a9a"/><path d="M0.4 2.4H9.4V9.4H0.4Z" fill="#b8b8b8"/><path d="M2 1.4h7" stroke="#ddd" stroke-width="0.5"/></svg>
<svg class="a" style="left:34.4px;top:204.6px;" width="7" height="7" viewBox="0 0 7 7"><path d="M3.2 0.2V6.2M0.2 3.2H6.2" stroke="#2aa544" stroke-width="1.6"/></svg>
<svg class="a" style="left:55.5px;top:199.4px;" width="10" height="8" viewBox="0 0 10 8"><path d="M2.2 0.6H4.6A3.2 3.2 0 0 1 4.6 7H2.2Q3.6 3.8 2.2 0.6Z" fill="#f0f0f0" stroke="#777" stroke-width="0.6"/><path d="M0.2 2.4H3M0.2 5.2H3M7.8 3.8H9.6" stroke="#777" stroke-width="0.6"/></svg>
<svg class="a" style="left:52.4px;top:205.3px;" width="7" height="7" viewBox="0 0 7 7"><path d="M3.2 0.2V6.2M0.2 3.2H6.2" stroke="#2aa544" stroke-width="1.6"/></svg>
<svg class="a" style="left:63.4px;top:210.20000000000002px;" width="3.2" height="2.4" viewBox="0 0 3.2 2.4"><path d="M0 0H3.2L1.6 2.4Z" fill="#444"/></svg>
<svg class="a" style="left:34.5px;top:218.6px;" width="12" height="9" viewBox="0 0 12 9"><rect x="3.4" y="0.2" width="4.8" height="8.6" fill="#555"/><path d="M0.4 2.2H3.4M0.4 6.4H3.4M8.2 6.4H10.2" stroke="#bbb" stroke-width="1.2"/></svg>
<svg class="a" style="left:53px;top:218.6px;" width="12" height="9" viewBox="0 0 12 9"><rect x="3.4" y="0.4" width="5" height="8.2" rx="1" fill="#fafafa" stroke="#999" stroke-width="0.6"/><path d="M1.4 3H3.4M1.4 6.4H3.4M8.4 6.4H10.2" stroke="#444" stroke-width="1.2"/></svg>
<svg class="a" style="left:34.6px;top:240px;" width="12" height="7.5" viewBox="0 0 12 7.5"><path d="M0.4 6.6H11M11 0.4V6.8" stroke="#3cbd5c" stroke-width="1" fill="none"/></svg>
<svg class="a" style="left:53px;top:239.8px;" width="12" height="7.5" viewBox="0 0 12 7.5"><path d="M0.4 6.2H10.4M10.4 0.4V7" stroke="#1e8ee6" stroke-width="1.6" fill="none"/></svg>
<svg class="a" style="left:63.4px;top:248.20000000000002px;" width="3.2" height="2.4" viewBox="0 0 3.2 2.4"><path d="M0 0H3.2L1.6 2.4Z" fill="#444"/></svg>
<svg class="a" style="left:34.6px;top:255.8px;" width="11.2" height="11.2" viewBox="0 0 11.2 11.2"><path d="M5.6 0V11.2M0 5.6H11.2" stroke="#555" stroke-width="0.8"/><circle cx="5.6" cy="5.6" r="1.9" fill="#1fb84e"/></svg>
<svg class="a" style="left:52.8px;top:255.6px;" width="11.5" height="11.5" viewBox="0 0 11.5 11.5"><path d="M2.6 0.5H10.8V7.6H2.6L0.5 4Z" fill="#f6f6f6" stroke="#888" stroke-width="0.6"/><text x="6.6" y="6.2" font-size="5" text-anchor="middle" fill="#333" font-family="Liberation Sans" font-weight="bold">AB</text><path d="M0.3 10.4H11" stroke="#3cbd5c" stroke-width="1"/></svg>
<div class="t" style="left:35.6px;top:276px;font-size:6px;color:#333;transform:scaleX(1.0691);transform-origin:0 0;font-weight:bold">R2</div>
<div class="t" style="left:35.8px;top:281.8px;font-size:5px;color:#bbb;transform:scaleX(0.9924);transform-origin:0 0;">10k</div>
<div class="t" style="left:54px;top:276px;font-size:6px;color:#c4c4c4;transform:scaleX(0.9387);transform-origin:0 0;font-weight:bold">R2</div>
<div class="t" style="left:54px;top:281.8px;font-size:5.4px;color:#222;transform:scaleX(0.9205);transform-origin:0 0;font-weight:bold">10k</div>
<svg class="a" style="left:63.4px;top:286.6px;" width="3.2" height="2.4" viewBox="0 0 3.2 2.4"><path d="M0 0H3.2L1.6 2.4Z" fill="#444"/></svg>
<svg class="a" style="left:34.5px;top:293px;" width="12" height="12" viewBox="0 0 12 12"><path d="M2.4 0.2L3 1.8L4.6 2.4L3 3L2.4 4.6L1.8 3L0.2 2.4L1.8 1.8Z" fill="#333"/><path d="M2.4 6.8L3 8.4L4.6 9L3 9.6L2.4 11.2L1.8 9.6L0.2 9L1.8 8.4Z" fill="#333"/><path d="M5.4 3.6H7A2.6 2.6 0 0 1 7 8.8H5.4Q6.4 6.2 5.4 3.6Z" fill="#f4f4f4" stroke="#999" stroke-width="0.6"/><path d="M9.6 6.2H11M4 5H5.8M4 7.4H5.8" stroke="#999" stroke-width="0.6"/></svg>
<svg class="a" style="left:52.6px;top:293.5px;" width="12" height="11" viewBox="0 0 12 11"><path d="M2.4 4A4 4 0 0 1 8.6 2.6" fill="none" stroke="#333" stroke-width="1"/><path d="M7.2 1.4L10 2.8L8 4.6Z" fill="#333"/><circle cx="2.4" cy="7.6" r="2" fill="#fff" stroke="#555" stroke-width="0.6"/><rect x="5.8" y="5.2" width="4.8" height="4.8" fill="#777"/></svg>
<svg class="a" style="left:63.4px;top:304.0px;" width="3.2" height="2.4" viewBox="0 0 3.2 2.4"><path d="M0 0H3.2L1.6 2.4Z" fill="#444"/></svg>
<svg class="a" style="left:34.8px;top:311.6px;" width="11" height="10" viewBox="0 0 11 10"><path d="M0.8 4.6L3.6 0.6H10.4L7.6 4.6Z" fill="#5e5e5e"/><path d="M0.8 4.6V8.6M7.6 4.6V8.8M10.4 0.6V5" stroke="#bbb" stroke-width="1" fill="none"/><path d="M0.8 4.6H7.6" stroke="#999" stroke-width="0.7"/></svg>
<svg class="a" style="left:52.8px;top:311px;" width="11.5" height="11.5" viewBox="0 0 11.5 11.5"><path d="M0.5 0.6H4.6L10.8 6.8L6.8 10.8L0.5 4.6Z" fill="#f4f4f4" stroke="#777" stroke-width="0.7"/><circle cx="2.4" cy="2.4" r="0.8" fill="#777"/><path d="M4 4.4L7.4 7.8M5.4 3.6L8.2 6.4" stroke="#aaa" stroke-width="0.6"/></svg>
<svg class="a" style="left:34.6px;top:328.6px;" width="12" height="11" viewBox="0 0 12 11"><path d="M0.8 0.4V10.8" stroke="#777" stroke-width="0.9"/><path d="M6.6 0.6L10.8 5.4L6.6 10.4" stroke="#777" stroke-width="0.8" fill="none"/><path d="M2.4 4.6H5" stroke="#333" stroke-width="0.9"/><path d="M4.6 3L6.8 4.6L4.6 6.2Z" fill="#333"/></svg>
<svg class="a" style="left:53px;top:328.8px;" width="11" height="11" viewBox="0 0 11 11"><path d="M0.5 0.5H10.5V3L3 10.5H0.5Z" fill="#fcfcfc" stroke="#777" stroke-width="0.7"/><path d="M3 10.5L10.5 3" stroke="#444" stroke-width="0.9"/></svg>
<svg class="a" style="left:34.8px;top:346.8px;" width="11.5" height="10.5" viewBox="0 0 11.5 10.5"><path d="M0.2 3H10.8M0.2 5.6H10.8M0.2 8.6H10.8" stroke="#999" stroke-width="0.7"/><path d="M3.6 0.6L7.2 9.8" stroke="#444" stroke-width="0.9"/></svg>
<svg class="a" style="left:34.6px;top:364px;" width="12" height="12" viewBox="0 0 12 12"><rect x="0.4" y="0.5" width="9.6" height="2.8" rx="0.8" fill="#f6f6f6" stroke="#666" stroke-width="0.7"/><path d="M10 1.9H11.2V4.4L6 6.2V8.4" stroke="#444" stroke-width="1.3" fill="none"/><rect x="4.8" y="7.8" width="2.4" height="3.8" rx="0.6" fill="#444"/></svg>
<svg class="a" style="left:53.2px;top:364.2px;" width="11" height="11" viewBox="0 0 11 11"><rect x="-1.1" y="-0.9" width="2.2" height="1.8" fill="#555" transform="translate(5.30 1.20) rotate(0)"/><rect x="-1.1" y="-0.9" width="2.2" height="1.8" fill="#555" transform="translate(8.20 2.40) rotate(45)"/><rect x="-1.1" y="-0.9" width="2.2" height="1.8" fill="#555" transform="translate(9.40 5.30) rotate(90)"/><rect x="-1.1" y="-0.9" width="2.2" height="1.8" fill="#555" transform="translate(8.20 8.20) rotate(135)"/><rect x="-1.1" y="-0.9" width="2.2" height="1.8" fill="#555" transform="translate(5.30 9.40) rotate(180)"/><rect x="-1.1" y="-0.9" width="2.2" height="1.8" fill="#555" transform="translate(2.40 8.20) rotate(225)"/><rect x="-1.1" y="-0.9" width="2.2" height="1.8" fill="#555" transform="translate(1.20 5.30) rotate(270)"/><rect x="-1.1" y="-0.9" width="2.2" height="1.8" fill="#555" transform="translate(2.40 2.40) rotate(315)"/></svg>
<svg class="a" style="left:34.6px;top:382px;" width="12" height="11" viewBox="0 0 12 11"><path d="M2.8 1.4A5 5 0 0 0 2.8 9.6" fill="none" stroke="#222" stroke-width="1.4"/><circle cx="3" cy="1.5" r="1.1" fill="#222"/><circle cx="3" cy="9.5" r="1.1" fill="#222"/><path d="M6.4 2.2H9.2M6.4 5H9.2M6.4 7.8H9.2" stroke="#333" stroke-width="1"/><rect x="9.3" y="0.4" width="1.8" height="10.2" fill="#fafafa" stroke="#777" stroke-width="0.6"/></svg>
<svg class="a" style="left:53px;top:382px;" width="12" height="11" viewBox="0 0 12 11"><path d="M2.8 1.4A5 5 0 0 0 2.8 9.6" fill="none" stroke="#222" stroke-width="1.4"/><circle cx="3" cy="1.5" r="1.1" fill="#222"/><circle cx="3" cy="9.5" r="1.1" fill="#222"/><path d="M6 0.4L8.6 2.4L6 4.4ZM8.4 0.4L11 2.4L8.4 4.4Z" fill="#555"/><path d="M6.6 5.8H8.2A2 2 0 0 1 8.2 9.8H6.6Z" fill="#fff" stroke="#777" stroke-width="0.6"/><path d="M10.2 7.8H11.2" stroke="#777" stroke-width="0.6"/></svg>
<svg class="a" style="left:34.6px;top:401.2px;" width="12" height="8" viewBox="0 0 12 8"><path d="M0.4 0.9H4.8M6.2 0.9H10.8" stroke="#999" stroke-width="1"/><path d="M0.4 6.2H4.2M10.8 6.2H6.8" stroke="#222" stroke-width="1"/><path d="M3.2 4.4L5.2 6.2L3.2 8ZM7.8 4.4L5.8 6.2L7.8 8Z" fill="#222"/></svg>
<svg class="a" style="left:52.6px;top:400.6px;" width="12" height="9" viewBox="0 0 12 9"><path d="M0.8 1.4H2.4A3.1 3.1 0 0 1 2.4 7.6H0.8Q1.8 4.5 0.8 1.4Z" fill="#fff" stroke="#777" stroke-width="0.7"/><path d="M5.2 4.5H6.6" stroke="#777" stroke-width="0.7"/><path d="M6.4 1.2H8.4A3.3 3.3 0 0 1 8.4 7.8H6.4Q7.4 4.5 6.4 1.2Z" fill="#222"/><path d="M11 4.5L8.8 2.6V6.4Z" fill="#222"/></svg>
<svg class="a" style="left:46.6px;top:424.8px;" width="6" height="7" viewBox="0 0 6 7"><path d="M0.4 0.6L3 2.4L5.6 0.6M0.4 3.6L3 5.4L5.6 3.6" fill="none" stroke="#555" stroke-width="0.8"/></svg>
<svg class="a" style="left:0;top:0" width="768" height="490" viewBox="0 0 768 490"><path d="M452 181.00H458.5" stroke="#e27b82" stroke-width="0.9"/><path d="M452 187.32H458.5" stroke="#e27b82" stroke-width="0.9"/><path d="M452 193.64H458.5" stroke="#e27b82" stroke-width="0.9"/><path d="M452 199.96H458.5" stroke="#e27b82" stroke-width="0.9"/><path d="M452 206.28H458.5" stroke="#e27b82" stroke-width="0.9"/><path d="M452 212.60H458.5" stroke="#e27b82" stroke-width="0.9"/><path d="M452 225.24H458.5" stroke="#e27b82" stroke-width="0.9"/><path d="M452 231.56H458.5" stroke="#e27b82" stroke-width="0.9"/><path d="M452 237.88H458.5" stroke="#e27b82" stroke-width="0.9"/><path d="M452 244.20H458.5" stroke="#e27b82" stroke-width="0.9"/><path d="M452 250.52H458.5" stroke="#e27b82" stroke-width="0.9"/><path d="M452 256.84H458.5" stroke="#e27b82" stroke-width="0.9"/><path d="M452 263.16H458.5" stroke="#e27b82" stroke-width="0.9"/><path d="M452 269.48H458.5" stroke="#e27b82" stroke-width="0.9"/><path d="M452 275.80H458.5" stroke="#e27b82" stroke-width="0.9"/><path d="M452 288.44H458.5" stroke="#e27b82" stroke-width="0.9"/><path d="M452 294.76H458.5" stroke="#e27b82" stroke-width="0.9"/><path d="M452 301.08H458.5" stroke="#e27b82" stroke-width="0.9"/><path d="M452 307.40H458.5" stroke="#e27b82" stroke-width="0.9"/><path d="M452 313.72H458.5" stroke="#e27b82" stroke-width="0.9"/><path d="M452 320.04H458.5" stroke="#e27b82" stroke-width="0.9"/><path d="M509 181.00H516.3" stroke="#e27b82" stroke-width="0.9"/><path d="M509 187.32H516.3" stroke="#e27b82" stroke-width="0.9"/><path d="M509 193.64H516.3" stroke="#e27b82" stroke-width="0.9"/><path d="M509 199.96H516.3" stroke="#e27b82" stroke-width="0.9"/><path d="M509 206.28H516.3" stroke="#e27b82" stroke-width="0.9"/><path d="M509 212.60H516.3" stroke="#e27b82" stroke-width="0.9"/><path d="M509 218.92H516.3" stroke="#e27b82" stroke-width="0.9"/><path d="M509 225.24H516.3" stroke="#e27b82" stroke-width="0.9"/><path d="M509 237.88H516.3" stroke="#e27b82" stroke-width="0.9"/><path d="M509 244.20H516.3" stroke="#e27b82" stroke-width="0.9"/><path d="M509 250.52H516.3" stroke="#e27b82" stroke-width="0.9"/><path d="M509 256.84H516.3" stroke="#e27b82" stroke-width="0.9"/><path d="M509 263.16H516.3" stroke="#e27b82" stroke-width="0.9"/><path d="M509 269.48H516.3" stroke="#e27b82" stroke-width="0.9"/><path d="M509 275.80H516.3" stroke="#e27b82" stroke-width="0.9"/><path d="M509 282.12H516.3" stroke="#e27b82" stroke-width="0.9"/><rect x="458.4" y="174.2" width="50.7" height="151.3" fill="none" stroke="#d4505a" stroke-width="1"/><path d="M482 250H486.4M484.2 247.8V252.2" stroke="#d4505a" stroke-width="0.8"/></svg>
<div class="t" style="left:463.9px;top:178.5px;font-size:5.9px;color:#a8a8a8;transform:scaleX(1.0000);transform-origin:0 0;transform:scaleX(0.86)!important;-webkit-text-stroke:0">A0</div>
<div class="t" style="left:463.9px;top:184.82px;font-size:5.9px;color:#a8a8a8;transform:scaleX(1.0000);transform-origin:0 0;transform:scaleX(0.86)!important;-webkit-text-stroke:0">A1</div>
<div class="t" style="left:463.9px;top:191.14px;font-size:5.9px;color:#a8a8a8;transform:scaleX(1.0000);transform-origin:0 0;transform:scaleX(0.86)!important;-webkit-text-stroke:0">A2</div>
<div class="t" style="left:463.9px;top:197.46px;font-size:5.9px;color:#a8a8a8;transform:scaleX(1.0000);transform-origin:0 0;transform:scaleX(0.86)!important;-webkit-text-stroke:0">A3</div>
<div class="t" style="left:463.9px;top:203.78px;font-size:5.9px;color:#a8a8a8;transform:scaleX(1.0000);transform-origin:0 0;transform:scaleX(0.86)!important;-webkit-text-stroke:0">A4</div>
<div class="t" style="left:463.9px;top:210.1px;font-size:5.9px;color:#a8a8a8;transform:scaleX(1.0000);transform-origin:0 0;transform:scaleX(0.86)!important;-webkit-text-stroke:0">A5</div>
<div class="t" style="left:463.9px;top:222.74px;font-size:5.9px;color:#a8a8a8;transform:scaleX(1.0000);transform-origin:0 0;transform:scaleX(0.86)!important;-webkit-text-stroke:0">IOREF</div>
<div class="t" style="left:463.9px;top:229.06px;font-size:5.9px;color:#a8a8a8;transform:scaleX(1.0000);transform-origin:0 0;transform:scaleX(0.86)!important;-webkit-text-stroke:0">RESET</div>
<div class="a" style="left:464px;top:229.26px;width:15.5px;height:0.6px;background:#c0c0c0"></div>
<div class="t" style="left:463.9px;top:235.38px;font-size:5.9px;color:#a8a8a8;transform:scaleX(1.0000);transform-origin:0 0;transform:scaleX(0.86)!important;-webkit-text-stroke:0">VIN</div>
<div class="t" style="left:463.9px;top:241.7px;font-size:5.9px;color:#a8a8a8;transform:scaleX(1.0000);transform-origin:0 0;transform:scaleX(0.86)!important;-webkit-text-stroke:0">5V</div>
<div class="t" style="left:463.9px;top:248.02px;font-size:5.9px;color:#a8a8a8;transform:scaleX(1.0000);transform-origin:0 0;transform:scaleX(0.86)!important;-webkit-text-stroke:0">3.3V</div>
<div class="t" style="left:463.9px;top:254.34000000000003px;font-size:5.9px;color:#a8a8a8;transform:scaleX(1.0000);transform-origin:0 0;transform:scaleX(0.86)!important;-webkit-text-stroke:0">AREF</div>
<div class="t" style="left:463.9px;top:260.65999999999997px;font-size:5.9px;color:#a8a8a8;transform:scaleX(1.0000);transform-origin:0 0;transform:scaleX(0.86)!important;-webkit-text-stroke:0">GND</div>
<div class="t" style="left:463.9px;top:266.98px;font-size:5.9px;color:#a8a8a8;transform:scaleX(1.0000);transform-origin:0 0;transform:scaleX(0.86)!important;-webkit-text-stroke:0">GND</div>
<div class="t" style="left:463.9px;top:273.3px;font-size:5.9px;color:#a8a8a8;transform:scaleX(1.0000);transform-origin:0 0;transform:scaleX(0.86)!important;-webkit-text-stroke:0">GND</div>
<div class="t" style="left:463.9px;top:285.94px;font-size:5.9px;color:#a8a8a8;transform:scaleX(1.0000);transform-origin:0 0;transform:scaleX(0.86)!important;-webkit-text-stroke:0">VCC</div>
<div class="t" style="left:463.9px;top:292.26px;font-size:5.9px;color:#a8a8a8;transform:scaleX(1.0000);transform-origin:0 0;transform:scaleX(0.86)!important;-webkit-text-stroke:0">MISO</div>
<div class="t" style="left:463.9px;top:298.58000000000004px;font-size:5.9px;color:#a8a8a8;transform:scaleX(1.0000);transform-origin:0 0;transform:scaleX(0.86)!important;-webkit-text-stroke:0">MOSI</div>
<div class="t" style="left:463.9px;top:304.9px;font-size:5.9px;color:#a8a8a8;transform:scaleX(1.0000);transform-origin:0 0;transform:scaleX(0.86)!important;-webkit-text-stroke:0">SCK</div>
<div class="t" style="left:463.9px;top:311.22px;font-size:5.9px;color:#a8a8a8;transform:scaleX(1.0000);transform-origin:0 0;transform:scaleX(0.86)!important;-webkit-text-stroke:0">RESET</div>
<div class="a" style="left:464px;top:311.42px;width:15.5px;height:0.6px;background:#c0c0c0"></div>
<div class="t" style="left:463.9px;top:317.54px;font-size:5.9px;color:#a8a8a8;transform:scaleX(1.0000);transform-origin:0 0;transform:scaleX(0.86)!important;-webkit-text-stroke:0">GND</div>
<div class="t" style="right:264.1px;top:178.5px;font-size:5.9px;color:#a8a8a8;transform:scaleX(1.0000);transform-origin:100% 0;transform:scaleX(0.86)!important;-webkit-text-stroke:0">D0</div>
<div class="t" style="right:264.1px;top:184.82px;font-size:5.9px;color:#a8a8a8;transform:scaleX(1.0000);transform-origin:100% 0;transform:scaleX(0.86)!important;-webkit-text-stroke:0">D1</div>
<div class="t" style="right:264.1px;top:191.14px;font-size:5.9px;color:#a8a8a8;transform:scaleX(1.0000);transform-origin:100% 0;transform:scaleX(0.86)!important;-webkit-text-stroke:0">D2</div>
<div class="t" style="right:264.1px;top:197.46px;font-size:5.9px;color:#a8a8a8;transform:scaleX(1.0000);transform-origin:100% 0;transform:scaleX(0.86)!important;-webkit-text-stroke:0">*D3</div>
<div class="t" style="right:264.1px;top:203.78px;font-size:5.9px;color:#a8a8a8;transform:scaleX(1.0000);transform-origin:100% 0;transform:scaleX(0.86)!important;-webkit-text-stroke:0">D4</div>
<div class="t" style="right:264.1px;top:210.1px;font-size:5.9px;color:#a8a8a8;transform:scaleX(1.0000);transform-origin:100% 0;transform:scaleX(0.86)!important;-webkit-text-stroke:0">*D5</div>
<div class="t" style="right:264.1px;top:216.42000000000002px;font-size:5.9px;color:#a8a8a8;transform:scaleX(1.0000);transform-origin:100% 0;transform:scaleX(0.86)!important;-webkit-text-stroke:0">*D6</div>
<div class="t" style="right:264.1px;top:222.74px;font-size:5.9px;color:#a8a8a8;transform:scaleX(1.0000);transform-origin:100% 0;transform:scaleX(0.86)!important;-webkit-text-stroke:0">D7</div>
<div class="t" style="right:264.1px;top:235.38px;font-size:5.9px;color:#a8a8a8;transform:scaleX(1.0000);transform-origin:100% 0;transform:scaleX(0.86)!important;-webkit-text-stroke:0">D8</div>
<div class="t" style="right:264.1px;top:241.7px;font-size:5.9px;color:#a8a8a8;transform:scaleX(1.0000);transform-origin:100% 0;transform:scaleX(0.86)!important;-webkit-text-stroke:0">*D9</div>
<div class="t" style="right:264.1px;top:248.02px;font-size:5.9px;color:#a8a8a8;transform:scaleX(1.0000);transform-origin:100% 0;transform:scaleX(0.86)!important;-webkit-text-stroke:0">*D10</div>
<div class="t" style="right:264.1px;top:254.34000000000003px;font-size:5.9px;color:#a8a8a8;transform:scaleX(1.0000);transform-origin:100% 0;transform:scaleX(0.86)!important;-webkit-text-stroke:0">*D11</div>
<div class="t" style="right:264.1px;top:260.65999999999997px;font-size:5.9px;color:#a8a8a8;transform:scaleX(1.0000);transform-origin:100% 0;transform:scaleX(0.86)!important;-webkit-text-stroke:0">D12</div>
<div class="t" style="right:264.1px;top:266.98px;font-size:5.9px;color:#a8a8a8;transform:scaleX(1.0000);transform-origin:100% 0;transform:scaleX(0.86)!important;-webkit-text-stroke:0">D13</div>
<div class="t" style="right:264.1px;top:273.3px;font-size:5.9px;color:#a8a8a8;transform:scaleX(1.0000);transform-origin:100% 0;transform:scaleX(0.86)!important;-webkit-text-stroke:0">SDA</div>
<div class="t" style="right:264.1px;top:279.62px;font-size:5.9px;color:#a8a8a8;transform:scaleX(1.0000);transform-origin:100% 0;transform:scaleX(0.86)!important;-webkit-text-stroke:0">SCL</div>
<div class="t" style="left:459.6px;top:167.4px;font-size:5.8px;color:#a8a8a8;transform:scaleX(1.0000);transform-origin:0 0;-webkit-text-stroke:0">B1</div>
<div class="t" style="left:458.4px;top:326.8px;font-size:5.6px;color:#b0b0b0;transform:scaleX(1.0272);transform-origin:0 0;-webkit-text-stroke:0">ARDUINO_UNO_R3</div>
<svg class="a" style="left:301px;top:366px;" width="11" height="11" viewBox="0 0 11 11"><path d="M5.4 0.8V10.4" stroke="#8a8a8a" stroke-width="0.9"/><path d="M0.6 5.4H10.4" stroke="#aaa" stroke-width="0.8"/><rect x="4.9" y="4.9" width="1" height="1" fill="#555"/></svg>
<svg class="a" style="left:227.5px;top:95.6px;" width="10" height="10" viewBox="0 0 10 10"><rect x="0.6" y="0.7" width="4.6" height="3.5" fill="none" stroke="#777" stroke-width="0.7"/><path d="M5 3.8L8.6 6.4L7 6.8L8.1 8.4L7.3 8.9L6.3 7.3L5 8.4Z" fill="#222"/></svg>
<svg class="a" style="left:247.5px;top:94.6px;" width="11" height="11" viewBox="0 0 11 11"><circle cx="4.3" cy="4.1" r="3.2" fill="none" stroke="#888" stroke-width="0.8"/><path d="M6.6 6.4L9 8.8" stroke="#777" stroke-width="1" stroke-linecap="round"/><rect x="3" y="3.4" width="2.4" height="1.6" fill="#999"/></svg>
<svg class="a" style="left:711.5px;top:436.2px;" width="11" height="11" viewBox="0 0 11 11"><path d="M6.4 0.4L0.6 6.2H4.4L3.4 10.6L10 4.4H6.2Z" fill="#f3c150"/></svg>
<svg class="a" style="left:725.6px;top:436px;" width="11" height="11" viewBox="0 0 11 11"><circle cx="5.4" cy="5.4" r="5.2" fill="#595959"/><rect x="4.5" y="1.9" width="1.8" height="4.6" rx="0.5" fill="#f4f4f4"/><rect x="4.5" y="7.4" width="1.8" height="1.7" fill="#f4f4f4"/></svg>
</div></div>
<div style="position:absolute;left:30px;top:20px;width:708px;height:430px;border-radius:5px;box-shadow:inset 0 0 0 1px rgba(0,0,0,0.28), inset 0 1px 0 1px rgba(255,255,255,0.25)"></div>
</body></html>
